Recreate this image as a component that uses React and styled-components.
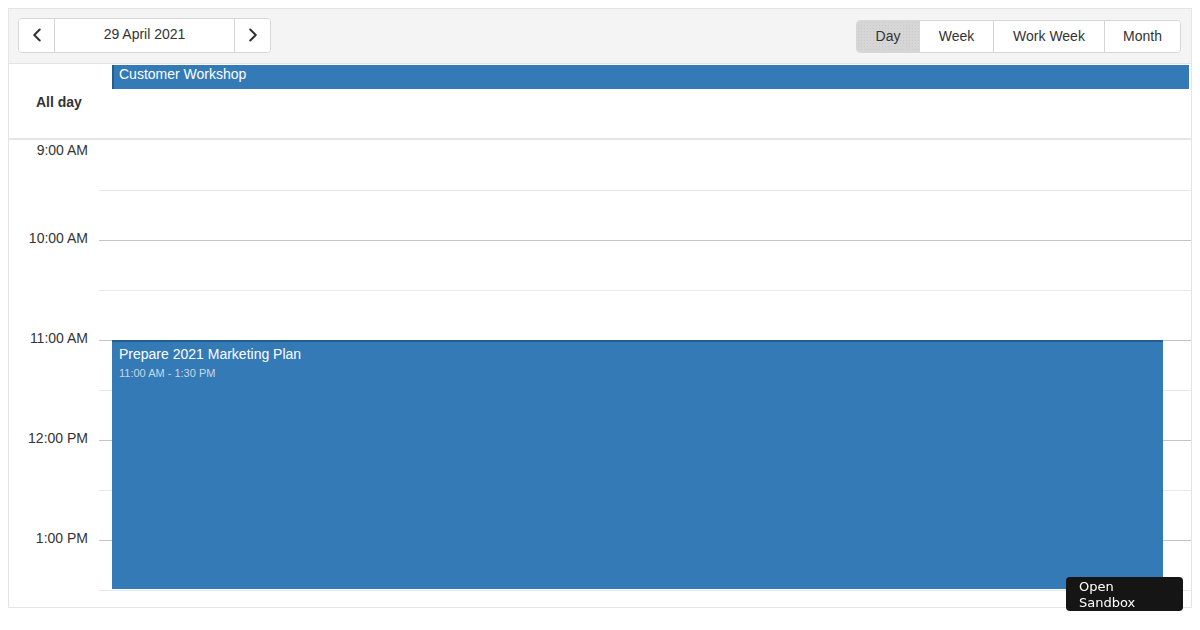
import React from 'react'
import styled, { createGlobalStyle } from 'styled-components'
import { ChevronLeft, ChevronRight } from 'lucide-react'

const GlobalStyle = createGlobalStyle`
  body {
    margin: 8px;
    font-family: "Liberation Sans", Arial, sans-serif;
    color: #333;
    background: #fff;
  }
  * { box-sizing: border-box; }
`

const hours = ['9:00 AM', '10:00 AM', '11:00 AM', '12:00 PM', '1:00 PM']
const slots = Array.from({ length: 9 }, (_, i) => i)

export default function App() {
  return (
    <>
      <GlobalStyle />
      <Scheduler>
        <Toolbar>
          <NavGroup>
            <NavButton aria-label="Previous">
              <ChevronLeft size={22} strokeWidth={2.2} />
            </NavButton>
            <DateLabel>29 April 2021</DateLabel>
            <NavButton aria-label="Next">
              <ChevronRight size={22} strokeWidth={2.2} />
            </NavButton>
          </NavGroup>
          <ViewGroup>
            <ViewButton $active $w={62}>Day</ViewButton>
            <ViewButton $w={74}>Week</ViewButton>
            <ViewButton $w={111}>Work Week</ViewButton>
            <ViewButton $w={76}>Month</ViewButton>
          </ViewGroup>
        </Toolbar>

        <AllDayRow>
          <AllDayLabel>All day</AllDayLabel>
          <AllDayCell>
            <AllDayEvent>Customer Workshop</AllDayEvent>
          </AllDayCell>
        </AllDayRow>

        <TimeArea>
          <TimeColumn>
            {hours.map((h, i) => (
              <TimeLabel key={h} $h={i === 0 ? 88 : 100}>{h}</TimeLabel>
            ))}
          </TimeColumn>
          <SlotColumn>
            {slots.map((i) => (
              <Slot key={i} $major={i % 2 === 1} />
            ))}
            <TimedEvent>
              <EventTitle>Prepare 2021 Marketing Plan</EventTitle>
              <EventTime>11:00 AM - 1:30 PM</EventTime>
            </TimedEvent>
          </SlotColumn>
        </TimeArea>
      </Scheduler>
      <SandboxTip>Open Sandbox</SandboxTip>
    </>
  )
}

const Scheduler = styled.div`
  height: 600px;
  border: 1px solid #e4e4e4;
  display: flex;
  flex-direction: column;
  overflow: hidden;
`

const Toolbar = styled.div`
  height: 55px;
  flex-shrink: 0;
  background: #f4f4f4;
  border-bottom: 1px solid #e4e4e4;
  display: flex;
  align-items: flex-start;
  justify-content: space-between;
  padding: 9px 10px 0 9px;
`

const NavGroup = styled.div`
  display: flex;
  height: 35px;
  border: 1px solid #d6d6d6;
  border-radius: 4px;
  background: #fff;
  overflow: hidden;
`

const NavButton = styled.button`
  width: 35px;
  border: 0;
  background: #fff;
  color: #333;
  display: flex;
  align-items: center;
  justify-content: center;
  padding: 0 0 1px;
  cursor: pointer;
`

const DateLabel = styled.div`
  width: 181px;
  border-left: 1px solid #d6d6d6;
  border-right: 1px solid #d6d6d6;
  display: flex;
  align-items: center;
  justify-content: center;
  font-size: 14px;
  padding-bottom: 3px;
`

const ViewGroup = styled.div`
  display: flex;
  height: 33px;
  margin-top: 2px;
  border: 1px solid #d6d6d6;
  border-radius: 4px;
  background: #fff;
  overflow: hidden;
`

const ViewButton = styled.button`
  width: ${(p) => p.$w}px;
  border: 0;
  border-left: 1px solid #d6d6d6;
  font-family: "Liberation Sans", Arial, sans-serif;
  font-size: 14px;
  color: #333;
  background-color: ${(p) => (p.$active ? '#d6d6d6' : '#fff')};
  background-image: ${(p) =>
    p.$active ? 'radial-gradient(#c9c9c9 0.6px, transparent 0.8px)' : 'none'};
  background-size: 3px 3px;
  padding: 0 0 1px;
  cursor: pointer;
  &:first-child { border-left: 0; }
`

const AllDayRow = styled.div`
  height: 76px;
  flex-shrink: 0;
  display: grid;
  grid-template-columns: 90px 1fr;
  border-bottom: 2px solid #e6e6e6;
`

const AllDayLabel = styled.div`
  font-size: 14px;
  font-weight: bold;
  padding: 30px 0 0 27px;
`

const AllDayCell = styled.div`
  padding: 1px 2px 0 13px;
`

const AllDayEvent = styled.div`
  height: 24px;
  background: #337ab7;
  border-left: 2px solid #245d8e;
  color: #fff;
  font-size: 14px;
  line-height: 19px;
  padding-left: 5px;
`

const TimeArea = styled.div`
  flex: 1;
  display: grid;
  grid-template-columns: 90px 1fr;
  overflow: hidden;
`

const TimeColumn = styled.div`
  display: flex;
  flex-direction: column;
`

const TimeLabel = styled.div`
  height: ${(p) => p.$h}px;
  flex-shrink: 0;
  text-align: right;
  padding-right: 11px;
  font-size: 14px;
  line-height: 20px;
`

const SlotColumn = styled.div`
  position: relative;
  padding-top: 1px;
`

const Slot = styled.div`
  height: 50px;
  border-bottom: 1px solid ${(p) => (p.$major ? '#c4c4c4' : '#e8e8e8')};
`

const TimedEvent = styled.div`
  position: absolute;
  top: 200px;
  left: 13px;
  right: 28px;
  height: 249px;
  background: #337ab7;
  border-top: 2px solid #245d8e;
  color: #fff;
  padding: 4px 7px;
`

const EventTitle = styled.div`
  font-size: 14px;
  line-height: 17px;
`

const EventTime = styled.div`
  font-size: 11px;
  line-height: 14px;
  margin-top: 3px;
  color: #c6d7e8;
`

const SandboxTip = styled.div`
  position: fixed;
  right: 17px;
  bottom: 19px;
  width: 117px;
  padding: 2px 13px 0;
  background: #151515;
  border-radius: 4px;
  color: #fff;
  font-family: "DejaVu Sans", sans-serif;
  font-size: 13px;
  line-height: 16px;
`
